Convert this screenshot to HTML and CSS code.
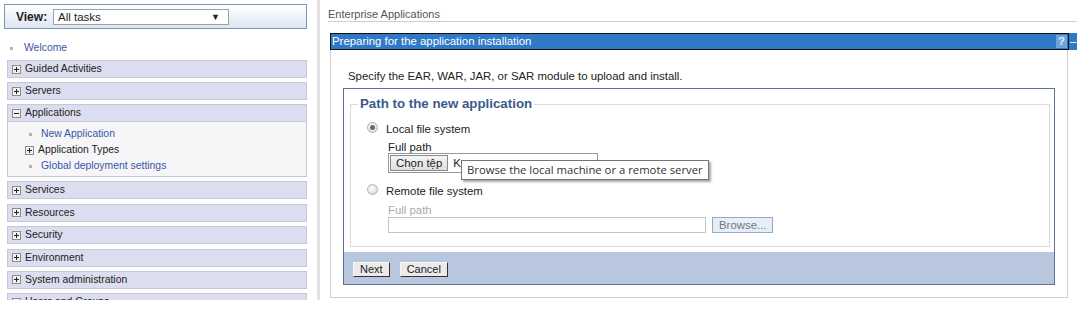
FILE: index.html
```html
<!DOCTYPE html>
<html>
<head>
    <title>Enterprise Applications</title>
    <link rel="stylesheet" href="styles.css">
</head>
<body>
<div class="page">

<div class="nav">
    <div class="view-box">
        <span class="view-label">View:</span>
        <div class="select">All tasks<span class="arrow">&#9660;</span></div>
    </div>

    <div class="welcome"><span class="bullet"></span><a href="#">Welcome</a></div>

    <div class="group"><div class="group-head"><svg class="tw" width="9" height="9"><rect x=".5" y=".5" width="8" height="8" fill="#f2f2f2" stroke="#8c8c8c"/><path d="M2 4.5h5M4.5 2v5" stroke="#222"/></svg>Guided Activities</div></div>
    <div class="group"><div class="group-head"><svg class="tw" width="9" height="9"><rect x=".5" y=".5" width="8" height="8" fill="#f2f2f2" stroke="#8c8c8c"/><path d="M2 4.5h5M4.5 2v5" stroke="#222"/></svg>Servers</div></div>
    <div class="group open">
        <div class="group-head"><svg class="tw" width="9" height="9"><rect x=".5" y=".5" width="8" height="8" fill="#f2f2f2" stroke="#8c8c8c"/><path d="M2 4.5h5" stroke="#222"/></svg>Applications</div>
        <div class="group-body">
            <div class="item"><span class="bullet"></span><a href="#">New Application</a></div>
            <div class="item sub"><svg class="tw" width="9" height="9"><rect x=".5" y=".5" width="8" height="8" fill="#f2f2f2" stroke="#8c8c8c"/><path d="M2 4.5h5M4.5 2v5" stroke="#222"/></svg>Application Types</div>
            <div class="item"><span class="bullet"></span><a href="#">Global deployment settings</a></div>
        </div>
    </div>
    <div class="group"><div class="group-head"><svg class="tw" width="9" height="9"><rect x=".5" y=".5" width="8" height="8" fill="#f2f2f2" stroke="#8c8c8c"/><path d="M2 4.5h5M4.5 2v5" stroke="#222"/></svg>Services</div></div>
    <div class="group"><div class="group-head"><svg class="tw" width="9" height="9"><rect x=".5" y=".5" width="8" height="8" fill="#f2f2f2" stroke="#8c8c8c"/><path d="M2 4.5h5M4.5 2v5" stroke="#222"/></svg>Resources</div></div>
    <div class="group"><div class="group-head"><svg class="tw" width="9" height="9"><rect x=".5" y=".5" width="8" height="8" fill="#f2f2f2" stroke="#8c8c8c"/><path d="M2 4.5h5M4.5 2v5" stroke="#222"/></svg>Security</div></div>
    <div class="group"><div class="group-head"><svg class="tw" width="9" height="9"><rect x=".5" y=".5" width="8" height="8" fill="#f2f2f2" stroke="#8c8c8c"/><path d="M2 4.5h5M4.5 2v5" stroke="#222"/></svg>Environment</div></div>
    <div class="group"><div class="group-head"><svg class="tw" width="9" height="9"><rect x=".5" y=".5" width="8" height="8" fill="#f2f2f2" stroke="#8c8c8c"/><path d="M2 4.5h5M4.5 2v5" stroke="#222"/></svg>System administration</div></div>
    <div class="group"><div class="group-head"><svg class="tw" width="9" height="9"><rect x=".5" y=".5" width="8" height="8" fill="#f2f2f2" stroke="#8c8c8c"/><path d="M2 4.5h5M4.5 2v5" stroke="#222"/></svg>Users and Groups</div></div>
</div>

<div class="main">
    <div class="crumb">Enterprise Applications</div>

    <div class="portlet">
        <div class="portlet-head">
            <div class="portlet-title">Preparing for the application installation<span class="help">?</span></div>
            <div class="portlet-min">&ndash;</div>
        </div>
        <div class="portlet-body">
            <p class="intro">Specify the EAR, WAR, JAR, or SAR module to upload and install.</p>

            <div class="wizard">
                <fieldset class="path-set">
                    <legend>Path to the new application</legend>

                    <div class="option"><span class="radio checked"></span>Local file system</div>
                    <div class="field">
                        <div class="field-label">Full path</div>
                        <div class="file-input"><span class="file-btn">Chọn tệp</span><span class="file-name">K</span></div>
                        <div class="tooltip">Browse the local machine or a remote server</div>
                    </div>

                    <div class="option option2"><span class="radio"></span>Remote file system</div>
                    <div class="field disabled">
                        <div class="field-label">Full path</div>
                        <div class="input-row"><span class="text-input"></span><span class="browse-btn">Browse...</span></div>
                    </div>
                </fieldset>

                <div class="wizard-foot">
                    <span class="btn">Next</span>
                    <span class="btn">Cancel</span>
                </div>
            </div>
        </div>
    </div>
</div>

</div>
</body>
</html>
```

FILE: styles.css
```css
BODY {
    margin : 0;
    overflow : hidden;
    font-family : "Liberation Sans", Arial, sans-serif;
    font-size : 11px;
    color : #222;
}
A {
    color : #3b55a4;
    text-decoration : none;
}
.page {
    display : flex;
    width : 1077px;
    height : 328px;
    align-items : flex-start;
}

/* left navigation */
.nav {
    width : 317px;
    height : 300px;
    flex : none;
    overflow : hidden;
    border-right : 3px solid #e3e3e3;
    font-size : 10.4px;
}
.view-box {
    margin : 4px 10px 0 4px;
    height : 23px;
    border : 1px solid #7c95bd;
    background : linear-gradient(#ffffff, #dde6f3);
    display : flex;
    align-items : center;
}
.view-label {
    font-weight : bold;
    font-size : 12px;
    margin-left : 11px;
    width : 37px;
}
.select {
    width : 170px;
    height : 14px;
    line-height : 14px;
    border : 1px solid #a0a0a0;
    background : #fff;
    padding : 0 0 0 4px;
    font-size : 11.5px;
    position : relative;
}
.select .arrow {
    position : absolute;
    right : 8px;
    top : 0;
    font-size : 9px;
}
.bullet {
    display : inline-block;
    width : 3px;
    height : 3px;
    background : #b4b4b4;
    vertical-align : middle;
}
.welcome {
    margin : 12px 0 0 10px;
    height : 14px;
    line-height : 14px;
}
.welcome .bullet {
    margin-right : 11px;
}
.group {
    margin : 4px 10px 0 7px;
    border : 1px solid #c6c8d6;
    background : #f6f6f9;
}
.welcome + .group {
    margin-top : 5px;
}
.open ~ .group {
    margin-top : 4.4px;
}
.group-head {
    height : 16px;
    line-height : 16px;
    background : #dcdef0;
    padding-left : 4px;
    display : flex;
    align-items : center;
}
.tw {
    flex : none;
    margin-right : 4px;
}
.group-body {
    border-top : 1px solid #c6c8d6;
    padding : 4px 0 2px 0;
}
.item {
    height : 16px;
    line-height : 16px;
    padding-left : 21px;
    display : flex;
    align-items : center;
}
.item .bullet {
    margin-right : 9px;
}
.item.sub {
    padding-left : 17px;
}

/* main content */
.main {
    flex : 1;
    padding-left : 8px;
}
.crumb {
    color : #555;
    padding-top : 8px;
    height : 13px;
    line-height : 13px;
    border-bottom : 1px solid #cfcfcf;
}
.portlet {
    margin : 11px 0 0 2px;
    font-size : 11.4px;
}
.portlet-head {
    display : flex;
}
.portlet-title {
    width : 736px;
    height : 15px;
    line-height : 15px;
    border : 1px solid #111;
    background : #3079c7;
    color : #fff;
    padding-left : 1px;
    position : relative;
}
.help {
    position : absolute;
    right : 1px;
    top : 1px;
    width : 11px;
    height : 13px;
    line-height : 13px;
    text-align : center;
    background : #6ea3de;
    font-weight : bold;
    color : #e8f0fa;
}
.portlet-min {
    width : 12px;
    height : 17px;
    line-height : 16px;
    background : #3079c7;
    color : #fff;
    padding-left : 1px;
    flex : none;
}
.portlet-body {
    width : 712px;
    border : 1px solid #cfcfcf;
    border-top : none;
    padding : 19px 12px 12px 12px;
}
.intro {
    margin : 0 0 5px 0;
    padding-left : 5px;
    height : 14px;
    line-height : 14px;
}
.wizard {
    border : 1px solid #5c7396;
}
.path-set {
    margin : 7px 4px 0 6px;
    padding : 0 0 13px 16px;
    border : 1px solid #dadada;
}
.path-set LEGEND {
    font-size : 13.3px;
    font-weight : bold;
    color : #3a5b8c;
    line-height : 16px;
    padding : 0 2px;
    margin-left : -9px;
}
.option {
    margin-top : 10px;
    height : 14px;
    line-height : 14px;
    display : flex;
    align-items : center;
}
.option2 {
    margin-top : 11px;
}
.option .radio {
    margin-top : -4px;
}
.radio {
    width : 9px;
    height : 9px;
    border : 1px solid #b0b0b0;
    border-radius : 50%;
    background : radial-gradient(circle at 40% 35%, #fdfdfd, #d4d4d4);
    margin-right : 8px;
    position : relative;
    flex : none;
}
.radio.checked::after {
    content : "";
    position : absolute;
    left : 2px;
    top : 2px;
    width : 5px;
    height : 5px;
    border-radius : 50%;
    background : #6a6a6a;
}
.field {
    padding-left : 21px;
    position : relative;
}
.field-label {
    margin-top : 5px;
    height : 12px;
    line-height : 12px;
}
.file-input {
    width : 208px;
    height : 18px;
    border : 1px solid #8e9aa8;
    display : flex;
    align-items : center;
}
.file-btn {
    margin-left : 1px;
    height : 14px;
    line-height : 14px;
    padding : 0 5px;
    border : 1px solid #8a8a8a;
    background : linear-gradient(#f6f6f6, #dedede);
}
.file-name {
    margin-left : 5px;
}
.tooltip {
    position : absolute;
    left : 94px;
    top : 19px;
    height : 18px;
    line-height : 18px;
    padding : 0 5px;
    font-family : "Open Sans", "Liberation Sans", sans-serif;
    font-size : 11.3px;
    color : #333;
    background : #fff;
    border : 1px solid #767676;
    box-shadow : 2px 2px 2px rgba(0, 0, 0, 0.35);
    white-space : nowrap;
}
.disabled .field-label {
    color : #aaa;
    margin-top : 6px;
}
.input-row {
    margin-top : 1px;
    display : flex;
}
.text-input {
    width : 316px;
    height : 14px;
    border : 1px solid #c4c4c4;
}
.browse-btn {
    margin-left : 6px;
    height : 14px;
    line-height : 14px;
    padding : 0 6px;
    border : 1px solid #95a9c6;
    background : #e6eef8;
    color : #777;
}
.wizard-foot {
    margin-top : 5px;
    height : 32px;
    background : #b8c6de;
    display : flex;
    align-items : flex-start;
    padding-left : 9px;
    gap : 10px;
}
.btn {
    margin-top : 10px;
    height : 13px;
    line-height : 13px;
    padding : 0 6px;
    font-size : 11px;
    background : #ebebeb;
    border : 1px solid;
    border-color : #f8f8f8 #333 #333 #f8f8f8;
}
```
